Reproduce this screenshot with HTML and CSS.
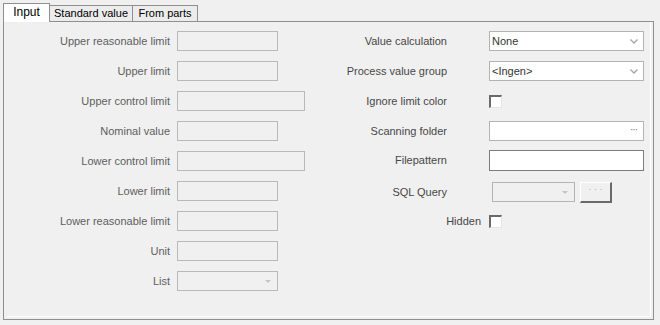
FILE: index.html
```html
<!DOCTYPE html>
<html>
<head>
<meta charset="utf-8">
<link rel="stylesheet" href="styles.css">
</head>
<body>
<div class="tabs">
  <div class="tab tab-active tab-input">Input</div>
  <div class="tab tab-std">Standard value</div>
  <div class="tab tab-parts">From parts</div>
</div>
<div class="panel">
  <div class="panel-inner">
    <div class="col col-left">
      <div class="row"><span class="lbl">Upper reasonable limit</span><span class="inp"></span></div>
      <div class="row"><span class="lbl">Upper limit</span><span class="inp"></span></div>
      <div class="row"><span class="lbl">Upper control limit</span><span class="inp inp-wide"></span></div>
      <div class="row"><span class="lbl">Nominal value</span><span class="inp"></span></div>
      <div class="row"><span class="lbl">Lower control limit</span><span class="inp inp-wide"></span></div>
      <div class="row"><span class="lbl">Lower limit</span><span class="inp"></span></div>
      <div class="row"><span class="lbl">Lower reasonable limit</span><span class="inp"></span></div>
      <div class="row"><span class="lbl">Unit</span><span class="inp"></span></div>
      <div class="row"><span class="lbl">List</span><span class="inp inp-combo"><span class="tri"></span></span></div>
    </div>
    <div class="col col-right">
      <div class="row"><span class="lbl">Value calculation</span><span class="sel"><span class="sel-text">None</span><svg class="chev" width="8" height="5" viewBox="0 0 8 5"><path d="M0.5 0.5 L4 4 L7.5 0.5" fill="none" stroke="#a6a6a6" stroke-width="1.4"/></svg></span></div>
      <div class="row"><span class="lbl">Process value group</span><span class="sel"><span class="sel-text">&lt;Ingen&gt;</span><svg class="chev" width="8" height="5" viewBox="0 0 8 5"><path d="M0.5 0.5 L4 4 L7.5 0.5" fill="none" stroke="#a6a6a6" stroke-width="1.4"/></svg></span></div>
      <div class="row"><span class="lbl">Ignore limit color</span><span class="chk"></span></div>
      <div class="row"><span class="lbl">Scanning folder</span><span class="sel sel-folder"><span class="dots">···</span></span></div>
      <div class="row row-fp"><span class="lbl">Filepattern</span><span class="txt"></span></div>
      <div class="row row-sql"><span class="lbl">SQL Query</span><span class="sql-ctrls"><span class="sql-combo"><span class="tri"></span></span><span class="btn"><span class="btn-dots">· · ·</span></span></span></div>
      <div class="row row-hidden"><span class="lbl">Hidden</span><span class="chk"></span></div>
    </div>
  </div>
</div>
</body>
</html>
```
FILE: styles.css
```css
html, body {
  margin: 0;
  padding: 0;
  background: #f0f0f0;
  font-family: "Liberation Sans", Arial, sans-serif;
  font-size: 11px;
  width: 660px;
  height: 325px;
  overflow: hidden;
}

.tabs {
  display: flex;
  align-items: flex-end;
  padding-left: 3px;
  padding-top: 3px;
  height: 18px;
  position: relative;
  z-index: 2;
}

.tab {
  box-sizing: border-box;
  height: 16px;
  border: 1px solid #8e8f8f;
  border-bottom: none;
  background: #ececec;
  color: #000;
  font-size: 11px;
  line-height: 15px;
  text-align: center;
  margin-left: -1px;
}

.tab:first-child { margin-left: 0; }

.tab-input {
  width: 47px;
  height: 19px;
  background: #ffffff;
  font-size: 12px;
  line-height: 16px;
  margin-bottom: -1px;
  position: relative;
  z-index: 3;
}

.tab-std { width: 84px; }
.tab-parts { width: 66px; }

.panel {
  box-sizing: border-box;
  margin-left: 3px;
  width: 651px;
  height: 299px;
  border: 1px solid #8e8f8f;
  background: #f0f0f0;
  padding: 0 2px 2px 3px;
}

.panel-inner {
  box-sizing: border-box;
  height: 100%;
  border-right: 1px solid #ffffff;
  border-bottom: 1px solid #ffffff;
  display: flex;
  padding-top: 4px;
}

.col { display: flex; flex-direction: column; }

.col-left { width: 323px; }

.row {
  height: 30px;
  display: flex;
  align-items: center;
}

.lbl {
  white-space: nowrap;
  text-align: right;
}

.col-left .lbl {
  width: 163px;
  margin-right: 7px;
  color: #5e5e5e;
}

.inp {
  box-sizing: border-box;
  width: 101px;
  height: 20px;
  border: 1px solid #b9b9b9;
  background: #f0f0f0;
  position: relative;
}

.inp-wide { width: 128px; }

.tri {
  position: absolute;
  right: 6px;
  top: 8px;
  width: 0;
  height: 0;
  border-left: 3px solid transparent;
  border-right: 3px solid transparent;
  border-top: 3px solid #c4c4c4;
}

.col-right .lbl {
  width: 117px;
  margin-right: 42px;
  color: #474747;
}

.sel {
  box-sizing: border-box;
  width: 155px;
  height: 20px;
  border: 1px solid #b4b4b4;
  background: #ffffff;
  display: flex;
  align-items: center;
  justify-content: space-between;
  padding: 0 5px 0 2px;
  color: #333;
}

.chev { display: block; margin-top: 1px; }

.sel-folder { justify-content: flex-end; padding-right: 6px; }

.dots {
  color: #777;
  font-size: 10px;
  letter-spacing: -1px;
  line-height: 10px;
  margin-top: -2px;
}

.chk {
  box-sizing: border-box;
  width: 13px;
  height: 13px;
  background: #fff;
  border: 1px solid #e4e4e4;
  border-top: 2px solid #6a6a6a;
  border-left: 2px solid #6a6a6a;
}

.txt {
  box-sizing: border-box;
  width: 155px;
  height: 21px;
  border: 1px solid #7d7d7d;
  background: #fff;
}

.row-fp { position: relative; top: -1px; }
.row-sql { position: relative; top: 1px; }

.sql-ctrls {
  display: flex;
  align-items: center;
  margin-left: 3px;
  gap: 5px;
}

.sql-combo {
  box-sizing: border-box;
  width: 83px;
  height: 20px;
  border: 1px solid #b4b4b4;
  background: #f0f0f0;
  position: relative;
}

.btn {
  box-sizing: border-box;
  width: 32px;
  height: 21px;
  background: #f0f0f0;
  border-top: 1px solid #ffffff;
  border-left: 1px solid #ffffff;
  border-right: 2px solid #6a6a6a;
  border-bottom: 2px solid #6a6a6a;
  display: flex;
  align-items: center;
  justify-content: center;
}

.btn-dots {
  color: #a8a8a8;
  font-size: 9px;
  line-height: 9px;
  margin-top: -4px;
}

.row-hidden .lbl {
  width: 151px;
  margin-right: 8px;
}
```
